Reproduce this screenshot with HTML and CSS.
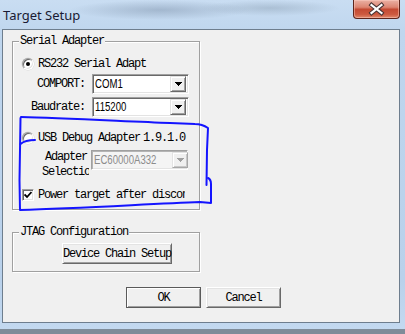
FILE: index.html
```html
<!DOCTYPE html>
<html>
<head>
<meta charset="utf-8">
<link rel="stylesheet" href="styles.css">
</head>
<body>
<div class="window">
  <div class="titlebar">
    <span class="title">Target Setup</span>
    <div class="close">
      <svg width="45" height="18" viewBox="0 0 45 18">
        <path d="M17.5 5 L27.5 13 M27.5 5 L17.5 13" stroke="#4a3434" stroke-width="4.2" stroke-linecap="square" fill="none"/>
        <path d="M17.5 5 L27.5 13 M27.5 5 L17.5 13" stroke="#ffffff" stroke-width="2.2" stroke-linecap="square" fill="none"/>
      </svg>
    </div>
  </div>
  <div class="client">
    <div class="group serial">
      <span class="legend txt">Serial Adapter</span>
      <div class="opt-row first">
        <span class="radio checked"></span>
        <span class="txt">RS232 Serial Adapt</span>
      </div>
      <div class="field-row comport">
        <span class="lbl txt">COMPORT:</span>
        <div class="combo">
          <span class="ctext">COM1</span>
          <span class="ddbtn"><svg width="7" height="4" viewBox="0 0 7 4"><path d="M0 0h7v1H0zM1 1h5v1H1zM2 2h3v1H2zM3 3h1v1H3z" fill="#000"/></svg></span>
        </div>
      </div>
      <div class="field-row baud">
        <span class="lbl txt">Baudrate:</span>
        <div class="combo">
          <span class="ctext">115200</span>
          <span class="ddbtn"><svg width="7" height="4" viewBox="0 0 7 4"><path d="M0 0h7v1H0zM1 1h5v1H1zM2 2h3v1H2zM3 3h1v1H3z" fill="#000"/></svg></span>
        </div>
      </div>
      <div class="opt-row usb">
        <span class="radio"></span>
        <span class="txt">USB Debug Adapter</span>
        <span class="txt ver">1.9.1.0</span>
      </div>
      <div class="sel-row">
        <div class="sel-lbl txt">
          <span class="l1">Adapter</span>
          <span class="l2">Selection</span>
        </div>
        <div class="combo disabled">
          <span class="ctext">EC60000A332</span>
          <span class="ddbtn"><svg width="7" height="4" viewBox="0 0 7 4"><path d="M0 0h7v1H0zM1 1h5v1H1zM2 2h3v1H2zM3 3h1v1H3z" fill="#a0a0a0"/></svg></span>
        </div>
      </div>
      <div class="opt-row chk-row">
        <span class="check"><svg width="8" height="8" viewBox="0 0 8 8"><path d="M0.5 3.5 L3 6 L7.5 1" stroke="#000" stroke-width="1.8" fill="none"/></svg></span>
        <span class="txt clip">Power target after disconnect</span>
      </div>
    </div>

    <div class="group jtag">
      <span class="legend txt">JTAG Configuration</span>
      <div class="btn chain txt">Device Chain Setup</div>
    </div>

    <div class="actions">
      <div class="btn default txt">OK</div>
      <div class="btn txt">Cancel</div>
    </div>
  </div>
</div>
<svg class="scribble" width="405" height="334" viewBox="0 0 405 334">
  <path d="M21 117 C 60 118, 120 121, 170 123 L 195 124 C 200 124, 205 126, 208 128 L 207 150 L 206.5 185" stroke="#1414ff" stroke-width="2" fill="none" stroke-linecap="round" stroke-linejoin="round"/>
  <path d="M208 178 C 210 179, 211 181, 211 184 L 211 203 L 200 202 C 150 204, 80 208, 20 210 L 19.5 180 L 20 150 L 20.5 118" stroke="#1414ff" stroke-width="2" fill="none" stroke-linecap="round" stroke-linejoin="round"/>
  <path d="M20.5 144 C 24 141, 30 140, 35 140" stroke="#1414ff" stroke-width="2" fill="none" stroke-linecap="round"/>
</svg>
</body>
</html>
```
FILE: styles.css
```css
* { box-sizing: border-box; }

body {
  margin: 0;
  width: 405px;
  height: 334px;
  overflow: hidden;
  position: relative;
  background: #7f8c99;
}

.window {
  height: 329px;
  display: flex;
  flex-direction: column;
  padding: 0 5px 6px 2px;
  background:
    radial-gradient(ellipse 90px 10px at 160px 10px, rgba(120,140,165,0.45), rgba(120,140,165,0)),
    radial-gradient(ellipse 70px 8px at 270px 8px, rgba(130,150,170,0.4), rgba(130,150,170,0)),
    linear-gradient(180deg, #c9ddf2 0%, #bfd6ee 10%, #b9d1eb 85%, #c3d9f0 100%);
}

.titlebar {
  height: 29px;
  display: flex;
  justify-content: space-between;
  align-items: flex-start;
}

.title {
  font-family: "Noto Sans", "Open Sans", sans-serif;
  font-size: 13px;
  line-height: 18px;
  color: #1a1a33;
  padding: 6px 0 0 1px;
}

.close {
  width: 47px;
  height: 19px;
  border: 1px solid #5d251c;
  border-top: none;
  border-radius: 0 0 4px 4px;
  background: linear-gradient(180deg, #eab1a4 0%, #dc8572 40%, #c44a33 52%, #cd5a40 80%, #e08a6e 100%);
  box-shadow: inset 0 0 0 1px rgba(255,210,200,0.45);
  display: flex;
  align-items: center;
  justify-content: center;
}

.client {
  flex: 1;
  border: 1px solid #6e7e8e;
  background: #f0f0f0;
}

.txt {
  font-family: "Liberation Mono", monospace;
  font-size: 12px;
  letter-spacing: -1.2px;
  color: #000;
  white-space: nowrap;
}

.group {
  position: relative;
  margin-left: 9px;
  width: 188px;
  border: 1px solid #a0a0a0;
  box-shadow: 1px 1px 0 #fff, inset 1px 1px 0 #fff;
}

.group.serial { margin-top: 11px; height: 169px; }
.group.jtag { margin-top: 22px; height: 40px; }

.legend {
  position: absolute;
  top: -8px;
  left: 6px;
  padding: 0 1px;
  line-height: 14px;
  background: #f0f0f0;
}

.opt-row {
  display: flex;
  align-items: center;
  height: 13px;
  padding-left: 9px;
  gap: 4px;
}
.opt-row.first { margin-top: 15px; }
.opt-row.usb { margin-top: 14px; }
.opt-row.usb .ver { margin-left: -1px; }
.opt-row.chk-row { margin-top: 8px; }

.radio {
  width: 12px;
  height: 12px;
  border-radius: 50%;
  background: #fff;
  border: 1px solid;
  border-color: #a0a0a0 #ffffff #ffffff #a0a0a0;
  box-shadow: inset 1px 1px 0 #696969, inset -1px -1px 0 #e3e3e3, 0 0 0 0.5px #d8d8d8;
  position: relative;
  flex: none;
}
.radio.checked::after {
  content: "";
  position: absolute;
  left: 3px;
  top: 3px;
  width: 4px;
  height: 4px;
  border-radius: 50%;
  background: #000;
}

.check {
  width: 12px;
  height: 12px;
  background: #fff;
  border: 1px solid;
  border-color: #a0a0a0 #ffffff #ffffff #a0a0a0;
  box-shadow: inset 1px 1px 0 #696969, inset -1px -1px 0 #e3e3e3;
  display: flex;
  align-items: center;
  justify-content: center;
  flex: none;
}

.clip {
  width: 147px;
  overflow: hidden;
}

.field-row {
  display: flex;
  align-items: center;
  height: 20px;
}
.field-row.comport { margin-top: 4px; }
.field-row.baud { margin-top: 3px; }

.lbl {
  width: 72px;
  text-align: right;
  margin-right: 7px;
}

.combo {
  width: 97px;
  height: 20px;
  display: flex;
  align-items: center;
  padding: 2px;
  background: #fff;
  border: 1px solid;
  border-color: #a0a0a0 #ffffff #ffffff #a0a0a0;
  box-shadow: inset 1px 1px 0 #696969, inset -1px -1px 0 #e3e3e3;
}
.combo.disabled {
  background: #f4f4f4;
  box-shadow: inset 1px 1px 0 #b4b4b4, inset -1px -1px 0 #e3e3e3;
}

.ctext {
  flex: 1;
  display: block;
  font-family: "Liberation Sans", Arial, sans-serif;
  font-size: 12px;
  line-height: 16px;
  color: #000;
  white-space: nowrap;
  transform: scaleX(0.8);
  transform-origin: left center;
}
.combo.disabled .ctext { color: #8c8c8c; }

.ddbtn {
  width: 16px;
  height: 16px;
  flex: none;
  display: flex;
  align-items: center;
  justify-content: center;
  background: #f0f0f0;
  border: 1px solid;
  border-color: #e3e3e3 #696969 #696969 #e3e3e3;
  box-shadow: inset 1px 1px 0 #fff, inset -1px -1px 0 #a0a0a0;
}
.combo.disabled .ddbtn {
  border-color: #e3e3e3 #a8a8a8 #a8a8a8 #e3e3e3;
  box-shadow: inset 1px 1px 0 #fff, inset -1px -1px 0 #c8c8c8;
}

.sel-row {
  display: flex;
  align-items: flex-start;
  height: 30px;
  margin-top: 6px;
}
.sel-lbl {
  margin-left: 29px;
  width: 47px;
  overflow: hidden;
  line-height: 15px;
  margin-right: 2px;
}
.sel-lbl span { display: block; }
.sel-lbl .l1 { padding-left: 3px; }

.btn {
  display: flex;
  align-items: center;
  justify-content: center;
  height: 21px;
  background: #f0f0f0;
  border: 1px solid;
  border-color: #ffffff #696969 #696969 #ffffff;
  box-shadow: inset 1px 1px 0 #e3e3e3, inset -1px -1px 0 #a0a0a0;
}
.btn.default {
  border-color: #5a5a5a;
  box-shadow: inset 1px 1px 0 #fff, inset -1px -1px 0 #a0a0a0;
}

.btn.chain {
  width: 110px;
  margin-top: 10px;
  margin-left: 49px;
}

.actions {
  display: flex;
  gap: 5px;
  margin-top: 15px;
  padding-left: 123px;
}
.actions .btn { width: 75px; }

.scribble {
  position: absolute;
  left: 0;
  top: 0;
  pointer-events: none;
}
```
